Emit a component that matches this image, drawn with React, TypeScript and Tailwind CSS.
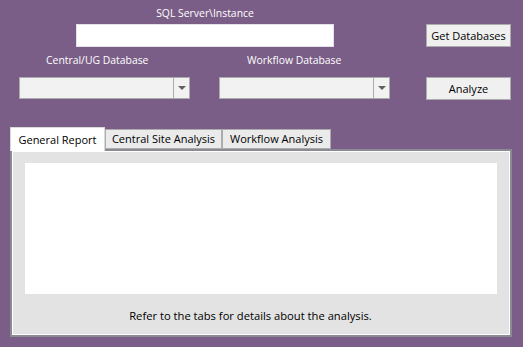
import React from 'react';

const Combo = () => (
  <div className="flex h-[22px] w-[171px] border border-[#acacac] bg-[#f2f2f2]">
    <div className="flex-1" />
    <div className="flex w-[16px] items-center justify-center border-l border-[#acacac]">
      <div className="h-0 w-0 border-x-[4px] border-t-[4px] border-x-transparent border-t-[#606060]" />
    </div>
  </div>
);

const WinButton = ({ label }: { label: string }) => (
  <button className="flex h-[23px] w-[85px] items-center justify-center border border-[#adadad] bg-[#f0f0f0] text-[11px] text-black">
    {label}
  </button>
);

const tabs = [
  { label: 'General Report', w: 'w-[95px]' },
  { label: 'Central Site Analysis', w: 'w-[117px]' },
  { label: 'Workflow Analysis', w: 'w-[109px]' },
];

export default function App() {
  return (
    <div
      className="flex h-[347px] w-[523px] flex-col bg-[#7b5e87] text-[11px] leading-[16px]"
      style={{ fontFamily: '"Segoe UI", "Open Sans", "Noto Sans", sans-serif' }}
    >
      {/* server row */}
      <div className="flex items-end pt-[5px]">
        <div className="ml-[76px] flex w-[258px] flex-col items-center">
          <span className="whitespace-nowrap text-[10.4px] text-white">SQL Server\Instance</span>
          <div className="mt-[3px] h-[23px] w-full border border-[#e6e0ea] bg-white" />
        </div>
        <div className="ml-[92px]">
          <WinButton label="Get Databases" />
        </div>
      </div>

      {/* database labels */}
      <div className="mt-[5px] flex whitespace-nowrap text-[10.4px] text-white">
        <span className="ml-[46px] w-[102px]">Central/UG Database</span>
        <span className="ml-[99px]">Workflow Database</span>
      </div>

      {/* combos */}
      <div className="mt-[9px] flex">
        <div className="ml-[19px]">
          <Combo />
        </div>
        <div className="ml-[29px]">
          <Combo />
        </div>
        <div className="ml-[36px]">
          <WinButton label="Analyze" />
        </div>
      </div>

      {/* tab control */}
      <div className="ml-[10px] mt-[27px] flex w-[502px] flex-col">
        <div className="relative z-10 flex h-[22px] items-start whitespace-nowrap">
          {tabs.map((t, i) =>
            i === 0 ? (
              <div
                key={t.label}
                className={`flex h-[24px] ${t.w} items-center justify-center border border-b-0 border-[#d9d9d9] bg-white text-black`}
              >
                {t.label}
              </div>
            ) : (
              <div
                key={t.label}
                className={`mt-[2px] flex h-[20px] ${t.w} items-center justify-center border border-[#acacac] bg-[#ebebeb] text-black`}
              >
                {t.label}
              </div>
            )
          )}
        </div>
        <div className="h-[188px] border-2 border-[#8b8b93]">
          <div className="flex h-full flex-col items-center border border-white bg-[#e3e3e3]">
            <div className="mt-[11px] h-[131px] w-[472px] bg-white" />
            <span className="mr-[21px] mt-[14px] text-[11.2px] text-black">
              Refer to the tabs for details about the analysis.
            </span>
          </div>
        </div>
      </div>
    </div>
  );
}
